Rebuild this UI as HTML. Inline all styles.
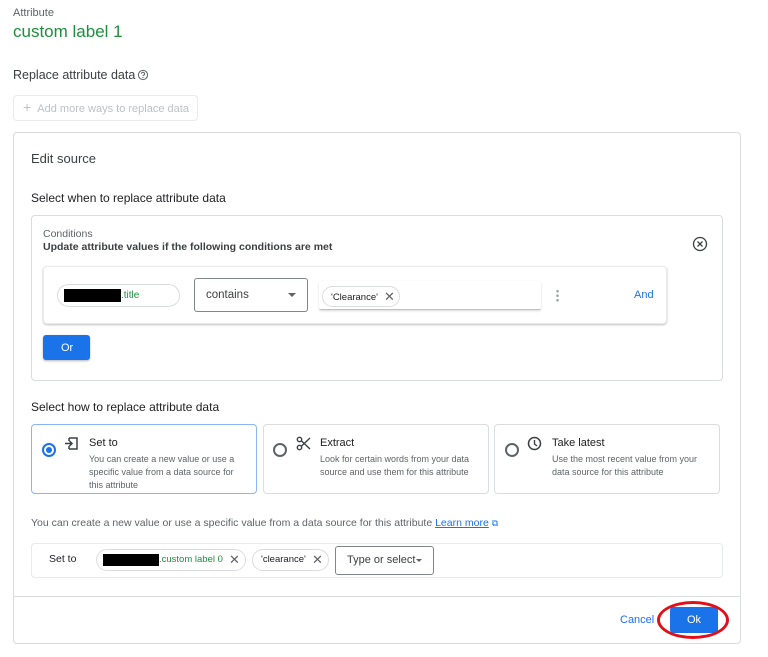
<!DOCTYPE html>
<html><head><style>
*{box-sizing:border-box;margin:0;padding:0}
body{width:768px;height:657px;background:#fff;font-family:"Liberation Sans",sans-serif;color:#3c4043;position:relative;overflow:hidden}
.a{position:absolute}
.t{white-space:nowrap}
.card{position:absolute;border:1px solid #dadce0;border-radius:4px;background:#fff}
.chip{position:absolute;border:1px solid #dadce0;border-radius:12px;background:#fff;font-size:10px;white-space:nowrap}
.x{position:absolute;font-size:13px;color:#5f6368}
.rad{position:absolute;width:14px;height:14px;border:2px solid #5f6368;border-radius:50%}
.ot{font-size:11px;font-weight:normal;color:#202124}
.od{font-size:9px;color:#5f6368;line-height:13px}
</style></head><body>
<div class="a t" style="left:13px;top:7px;font-size:11px;color:#5f6368">Attribute</div>
<div class="a t" style="left:13px;top:22px;font-size:17px;color:#1e8e3e">custom label 1</div>
<div class="a t" style="left:13px;top:68px;font-size:12.5px;color:#3c4043">Replace attribute data</div>
<svg class="a" style="left:137px;top:69px" width="12" height="12" viewBox="0 0 12 12"><circle cx="6" cy="6" r="4.6" fill="none" stroke="#5f6368" stroke-width="1"/><path d="M4.5 4.8a1.5 1.5 0 1 1 2 1.4c-.4.2-.5.4-.5.9" fill="none" stroke="#5f6368" stroke-width="1"/><circle cx="6" cy="8.5" r=".6" fill="#5f6368"/></svg>
<div class="card" style="left:13px;top:95px;width:185px;height:26px;border-color:#e8eaed"></div>
<div class="a t" style="left:23px;top:101px;font-size:11px;color:#bdc1c6"><span style="font-size:14px;line-height:12px">+</span> &nbsp;Add more ways to replace data</div>

<div class="card" style="left:13px;top:132px;width:728px;height:512px"></div>
<div class="a t" style="left:31px;top:151px;font-size:13px;color:#3c4043">Edit source</div>
<div class="a t" style="left:31px;top:191px;font-size:12px;color:#202124">Select when to replace attribute data</div>
<div class="card" style="left:31px;top:215px;width:692px;height:166px"></div>
<div class="a t" style="left:43px;top:228px;font-size:10.5px;color:#5f6368">Conditions</div>
<div class="a t" style="left:43px;top:241px;font-size:10.5px;font-weight:bold;color:#3c4043">Update attribute values if the following conditions are met</div>
<svg class="a" style="left:692px;top:236px" width="16" height="16" viewBox="0 0 16 16"><circle cx="8" cy="8" r="6.5" fill="none" stroke="#3c4043" stroke-width="1.3"/><path d="M5.5 5.5l5 5M10.5 5.5l-5 5" stroke="#3c4043" stroke-width="1.3"/></svg>
<div class="card" style="left:43px;top:266px;width:624px;height:58px;border-color:#e8eaed;box-shadow:0 1px 2px rgba(0,0,0,.25)"></div>
<div class="chip" style="left:57px;top:284px;width:123px;height:23px"></div>
<div class="a" style="left:64px;top:289px;width:57px;height:13px;background:#000"></div>
<div class="a t" style="left:121px;top:290px;font-size:10px;color:#1e8e3e">.title</div>
<div class="a" style="left:194px;top:278px;width:114px;height:34px;border:1px solid #80868b;border-radius:3px"></div>
<div class="a t" style="left:206px;top:289px;font-size:11.5px;color:#3c4043">contains</div>
<div class="a" style="left:288px;top:293px;border:4px solid transparent;border-top:4px solid #5f6368"></div>
<div class="a" style="left:319px;top:281px;width:222px;height:29px;border-bottom:1px solid #bdc1c6;box-shadow:0 1px 2px rgba(0,0,0,.15);border-radius:2px"></div>
<div class="chip" style="left:322px;top:286px;width:78px;height:21px"></div>
<div class="a t" style="left:331px;top:292px;font-size:9.5px;color:#202124">'Clearance'</div>
<div class="x" style="left:384px;top:289px">✕</div>
<div class="a" style="left:556px;top:289px;width:3px;height:13px;background:radial-gradient(circle,#9aa0a6 1.2px,transparent 1.4px) 0 0/3px 4.5px"></div>
<div class="a t" style="left:634px;top:289px;font-size:11px;color:#1a73e8">And</div>
<div class="a" style="left:43px;top:335px;width:47px;height:25px;background:#1a73e8;border-radius:3px;box-shadow:0 1px 2px rgba(0,0,0,.3)"></div>
<div class="a t" style="left:61px;top:342px;font-size:11px;color:#fff">Or</div>

<div class="a t" style="left:31px;top:400px;font-size:12px;color:#202124">Select how to replace attribute data</div>
<div class="card" style="left:31px;top:424px;width:226px;height:70px;border-color:#8ab4f8"></div>
<div class="card" style="left:263px;top:424px;width:226px;height:70px"></div>
<div class="card" style="left:494px;top:424px;width:226px;height:70px"></div>
<div class="rad" style="left:42px;top:443px;border-color:#1a73e8"></div>
<div class="a" style="left:46px;top:447px;width:6px;height:6px;border-radius:50%;background:#1a73e8"></div>
<div class="rad" style="left:273px;top:443px"></div>
<div class="rad" style="left:505px;top:443px"></div>
<svg class="a" style="left:64px;top:436px" width="15" height="15" viewBox="0 0 15 15"><path d="M5 2H13V13H5M5 2v3M5 13v-3M1 7.5h7M5.5 5l2.5 2.5-2.5 2.5" fill="none" stroke="#3c4043" stroke-width="1.5"/></svg>
<svg class="a" style="left:296px;top:436px" width="15" height="15" viewBox="0 0 15 15"><circle cx="3.5" cy="3.5" r="2.2" fill="none" stroke="#3c4043" stroke-width="1.4"/><circle cx="3.5" cy="11.5" r="2.2" fill="none" stroke="#3c4043" stroke-width="1.4"/><path d="M5.3 4.8L14 13M5.3 10.2L14 2" stroke="#3c4043" stroke-width="1.4"/></svg>
<svg class="a" style="left:527px;top:436px" width="15" height="15" viewBox="0 0 15 15"><circle cx="7.5" cy="7.5" r="6" fill="none" stroke="#3c4043" stroke-width="1.5"/><path d="M7.5 4v4l2.5 2" fill="none" stroke="#3c4043" stroke-width="1.4"/></svg>
<div class="a t ot" style="left:89px;top:437px">Set to</div>
<div class="a od" style="left:89px;top:453px;width:158px">You can create a new value or use a specific value from a data source for this attribute</div>
<div class="a t ot" style="left:320px;top:437px">Extract</div>
<div class="a od" style="left:320px;top:453px;width:165px">Look for certain words from your data source and use them for this attribute</div>
<div class="a t ot" style="left:552px;top:437px">Take latest</div>
<div class="a od" style="left:552px;top:453px;width:165px">Use the most recent value from your data source for this attribute</div>

<div class="a t" style="left:31px;top:517px;font-size:10.5px;color:#5f6368">You can create a new value or use a specific value from a data source for this attribute <span style="color:#1a73e8;text-decoration:underline">Learn more</span> <span style="color:#1a73e8;font-size:9px">⧉</span></div>
<div class="card" style="left:31px;top:543px;width:692px;height:35px;border-color:#e8eaed"></div>
<div class="a t" style="left:49px;top:553px;font-size:10.5px;color:#202124">Set to</div>
<div class="chip" style="left:96px;top:549px;width:150px;height:22px"></div>
<div class="a" style="left:103px;top:554px;width:56px;height:12px;background:#000"></div>
<div class="a t" style="left:159px;top:554px;font-size:9.5px;color:#1e8e3e">.custom label 0</div>
<div class="x" style="left:229px;top:552px">✕</div>
<div class="chip" style="left:252px;top:549px;width:77px;height:22px"></div>
<div class="a t" style="left:261px;top:554px;font-size:9.5px;color:#202124">'clearance'</div>
<div class="x" style="left:312px;top:552px">✕</div>
<div class="a" style="left:335px;top:546px;width:99px;height:29px;border:1px solid #80868b;border-radius:3px"></div>
<div class="a t" style="left:347px;top:554px;font-size:11px;color:#3c4043">Type or select</div>
<div class="a" style="left:416px;top:559px;border:3.5px solid transparent;border-top:3.5px solid #5f6368"></div>

<div class="a" style="left:14px;top:596px;width:726px;height:1px;background:#dadce0"></div>
<div class="a t" style="left:620px;top:614px;font-size:11px;color:#1a73e8">Cancel</div>
<div class="a" style="left:670px;top:607px;width:48px;height:26px;background:#1a73e8;border-radius:3px"></div>
<div class="a t" style="left:687px;top:614px;font-size:11px;color:#fff">Ok</div>
<div class="a" style="left:657px;top:601px;width:72px;height:38px;border:3.5px solid #e0101a;border-radius:50%"></div>
</body></html>
